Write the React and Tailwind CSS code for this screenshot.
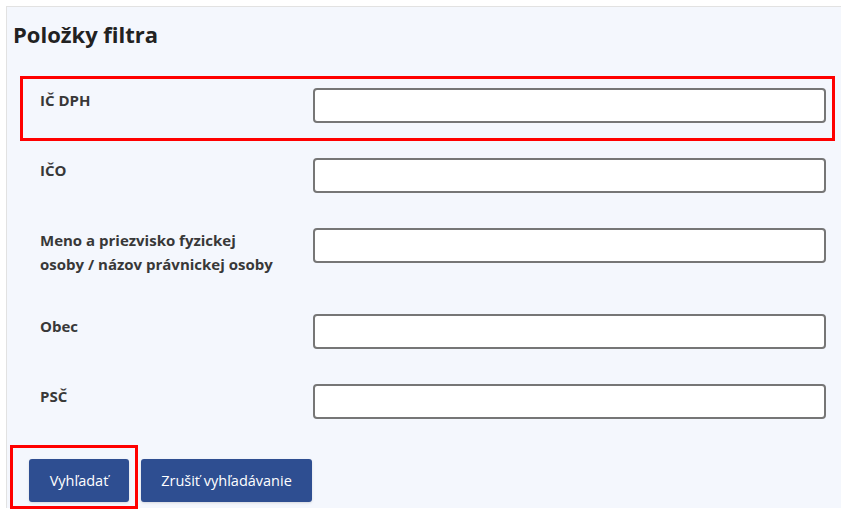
const fields = [
  { id: "icdph", label: "IČ DPH", marked: true },
  { id: "ico", label: "IČO" },
  {
    id: "meno",
    label: (
      <>
        Meno a priezvisko fyzickej
        <br />
        osoby / názov právnickej osoby
      </>
    ),
  },
  { id: "obec", label: "Obec" },
  { id: "psc", label: "PSČ" },
];

function Field({ label, marked }) {
  return (
    <div className="relative flex items-start">
      {marked && (
        <div className="pointer-events-none absolute left-[-20px] top-[-12px] h-[65px] w-[815px] border-[3px] border-[#ff0000]" />
      )}
      <label className="w-[273px] pr-4 pb-[3px] text-[15px] font-bold leading-[24px] text-[#383838]">
        {label}
      </label>
      <input
        type="text"
        className="h-[35px] flex-1 rounded-[4px] border-2 border-[#767676] bg-white px-2 text-[14px] outline-none"
      />
    </div>
  );
}

export default function App() {
  return (
    <div className="min-h-screen bg-white pl-[6px] pt-[6px] font-['Open_Sans',sans-serif]">
      <div className="w-[835px] border-t border-l border-[#e2e2e2] bg-[#f4f7fd] pb-[6px]">
        {/* Heading */}
        <h2 className="pl-[6px] pt-[12px] pb-[3px] text-[22px] font-bold leading-[30px] text-[#222222]">
          Položky filtra
        </h2>

        {/* Form rows */}
        <div className="mt-[36px] flex flex-col gap-[35px] pl-[33px] pr-[15px]">
          {fields.map((f) => (
            <Field key={f.id} {...f} />
          ))}
        </div>

        {/* Buttons */}
        <div className="relative mt-[40px] flex gap-3 pl-[22px]">
          <div className="pointer-events-none absolute left-[3px] top-[-14px] h-[64px] w-[128px] border-[3px] border-[#ff0000]" />
          <button className="h-[43px] w-[100px] rounded-[3px] bg-[#2e4e91] text-[14.5px] text-white shadow-sm">
            Vyhľadať
          </button>
          <button className="h-[43px] w-[171px] rounded-[3px] bg-[#2e4e91] text-[14.5px] text-white shadow-sm">
            Zrušiť vyhľadávanie
          </button>
        </div>
      </div>
    </div>
  );
}
